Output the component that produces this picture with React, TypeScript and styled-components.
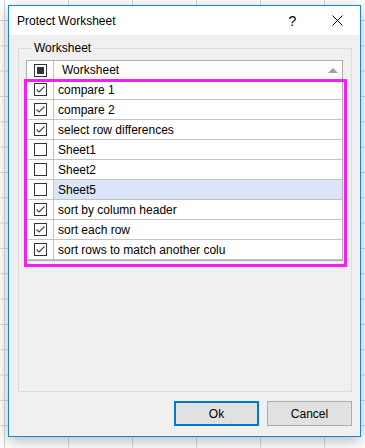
import React from 'react';
import styled, { createGlobalStyle } from 'styled-components';

const GlobalStyle = createGlobalStyle`
  html, body {
    margin: 0;
    padding: 0;
  }
  body {
    width: 365px;
    height: 448px;
    overflow: hidden;
    background-color: #ffffff;
    background-image:
      linear-gradient(to right, #d6d6d6 1px, transparent 1px),
      linear-gradient(to bottom, #d6d6d6 1px, transparent 1px);
    background-size: 64px 100%, 100% 25.33px;
    background-position: 4px 0, 0 20px;
    font-family: "Liberation Sans", Arial, sans-serif;
  }
`;

const Page = styled.div`
  padding: 5px 0 0 8px;
`;

const Dialog = styled.div`
  width: 351px;
  height: 430px;
  border: 1px solid #1883d7;
  background: #f0f0f0;
  box-shadow: 0 4px 14px rgba(0, 0, 0, 0.28);
  display: flex;
  flex-direction: column;
`;

const TitleBar = styled.div`
  height: 29px;
  background: #ffffff;
  display: flex;
  align-items: center;
`;

const Title = styled.div`
  flex: 1;
  padding-left: 8px;
  font-size: 12px;
  color: #000;
`;

const TitleButton = styled.div`
  width: 45px;
  height: 29px;
  display: flex;
  align-items: center;
  justify-content: center;
  font-size: 14px;
  color: #000;
`;

const Body = styled.div`
  flex: 1;
  display: flex;
  flex-direction: column;
  padding: 6px 8px 0 9px;
`;

const Group = styled.fieldset`
  margin: 0;
  padding: 5px 8px 7px 7px;
  border: 1px solid #dcdcdc;
  height: 351px;
  box-sizing: border-box;
`;

const Legend = styled.legend`
  padding: 0 2px;
  margin-left: 6px;
  font-size: 12px;
  line-height: 14px;
  color: #000;
`;

const ListBox = styled.div`
  position: relative;
  height: 100%;
  box-sizing: border-box;
  border: 1px solid #adadad;
  background: #ffffff;
`;

const Row = styled.div<{ $header?: boolean }>`
  display: flex;
  height: ${(p) => (p.$header ? 19 : 20)}px;
  box-sizing: border-box;
  border-bottom: 1px solid ${(p) => (p.$header ? '#ffffff' : '#c3c3c3')};
  font-size: 12px;
  color: #000;
`;

const BoxCell = styled.div`
  width: 27px;
  box-sizing: border-box;
  border-right: 1px solid #c3c3c3;
  padding-left: 7px;
  display: flex;
  align-items: center;
`;

const TextCell = styled.div<{ $selected?: boolean; $header?: boolean }>`
  flex: 1;
  display: flex;
  align-items: center;
  padding-left: ${(p) => (p.$header ? 8 : 4)}px;
  background: ${(p) => (p.$selected ? '#dae6f8' : 'transparent')};
  white-space: nowrap;
  overflow: hidden;
`;

const HeaderLabel = styled.span`
  flex: 1;
`;

const SortArrow = styled.div`
  width: 0;
  height: 0;
  margin-right: 4px;
  border-left: 5px solid transparent;
  border-right: 5px solid transparent;
  border-bottom: 5px solid #a0a0a0;
`;

const Highlight = styled.div`
  position: absolute;
  left: -3px;
  top: 18px;
  width: 323px;
  height: 188px;
  box-sizing: border-box;
  border: 3px solid #f21ff0;
  pointer-events: none;
`;

const Buttons = styled.div`
  display: flex;
  justify-content: flex-end;
  gap: 8px;
  padding-top: 9px;
`;

const Button = styled.div<{ $primary?: boolean }>`
  width: 85px;
  height: 25px;
  box-sizing: border-box;
  display: flex;
  align-items: center;
  justify-content: center;
  background: #e1e1e1;
  border: ${(p) => (p.$primary ? '2px solid #0078d7' : '1px solid #adadad')};
  font-size: 12px;
  color: #000;
`;

const Check = ({ state }: { state: 'on' | 'off' | 'mixed' }) => (
  <svg width="13" height="13" viewBox="0 0 13 13">
    <rect x="0.5" y="0.5" width="12" height="12" fill="#fff" stroke="#333" />
    {state === 'mixed' && <rect x="3" y="3" width="7" height="7" fill="#333" />}
    {state === 'on' && (
      <path d="M2.5 6.5 L5 9 L10.5 3.5" fill="none" stroke="#444" strokeWidth="1.1" />
    )}
  </svg>
);

const CloseIcon = () => (
  <svg width="11" height="11" viewBox="0 0 11 11">
    <path d="M0.5 0.5 L10.5 10.5 M10.5 0.5 L0.5 10.5" stroke="#000" strokeWidth="1" />
  </svg>
);

const sheets = [
  { name: 'compare 1', checked: true },
  { name: 'compare 2', checked: true },
  { name: 'select row differences', checked: true },
  { name: 'Sheet1', checked: false },
  { name: 'Sheet2', checked: false },
  { name: 'Sheet5', checked: false, selected: true },
  { name: 'sort by column header', checked: true },
  { name: 'sort each row', checked: true },
  { name: 'sort rows to match another colu', checked: true },
];

const App: React.FC = () => (
  <>
    <GlobalStyle />
    <Page>
      <Dialog>
        <TitleBar>
          <Title>Protect Worksheet</Title>
          <TitleButton>?</TitleButton>
          <TitleButton>
            <CloseIcon />
          </TitleButton>
        </TitleBar>
        <Body>
          <Group>
            <Legend>Worksheet</Legend>
            <ListBox>
              <Row $header>
                <BoxCell>
                  <Check state="mixed" />
                </BoxCell>
                <TextCell $header>
                  <HeaderLabel>Worksheet</HeaderLabel>
                  <SortArrow />
                </TextCell>
              </Row>
              {sheets.map((s) => (
                <Row key={s.name}>
                  <BoxCell>
                    <Check state={s.checked ? 'on' : 'off'} />
                  </BoxCell>
                  <TextCell $selected={s.selected}>{s.name}</TextCell>
                </Row>
              ))}
              <Highlight />
            </ListBox>
          </Group>
          <Buttons>
            <Button $primary>Ok</Button>
            <Button>Cancel</Button>
          </Buttons>
        </Body>
      </Dialog>
    </Page>
  </>
);

export default App;
